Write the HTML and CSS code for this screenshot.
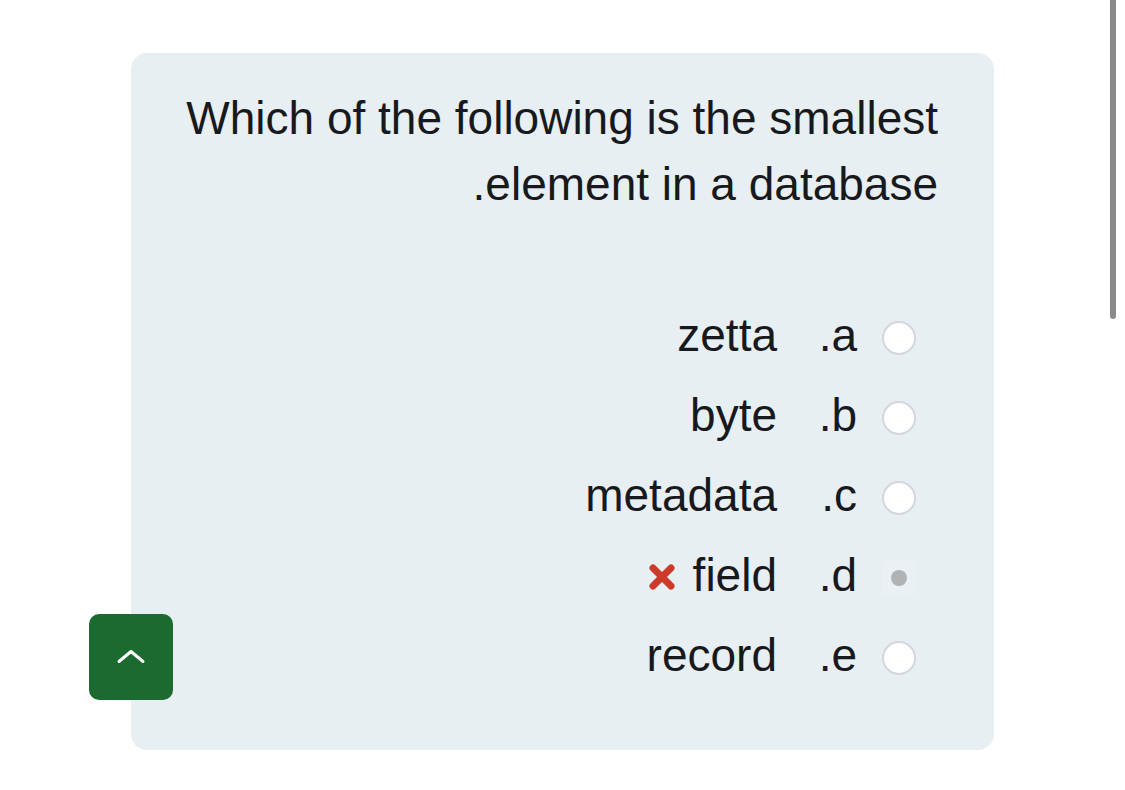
FILE: index.html
```html
<!DOCTYPE html>
<html lang="en">
<head>
<meta charset="utf-8">
<title>Quiz question</title>
<link rel="stylesheet" href="styles.css">
</head>
<body>
<div class="page">
  <div class="card" dir="rtl">
    <div class="qtext">Which of the following is the smallest element in a database.</div>
    <div class="answers">
      <div class="answer">
        <span class="radio"></span>
        <span class="num">a.</span>
        <span class="label">zetta</span>
      </div>
      <div class="answer">
        <span class="radio"></span>
        <span class="num">b.</span>
        <span class="label">byte</span>
      </div>
      <div class="answer">
        <span class="radio"></span>
        <span class="num">c.</span>
        <span class="label">metadata</span>
      </div>
      <div class="answer">
        <span class="radio checked"><span class="dot"></span></span>
        <span class="num">d.</span>
        <span class="label">field</span>
        <svg class="xicon" viewBox="0 0 30 30" width="30" height="30" aria-hidden="true">
          <path d="M6 6 L24 24 M24 6 L6 24" stroke="#cc3a2a" stroke-width="7" stroke-linecap="round" fill="none"/>
        </svg>
      </div>
      <div class="answer">
        <span class="radio"></span>
        <span class="num">e.</span>
        <span class="label">record</span>
      </div>
    </div>
  </div>
  <button class="back-btn" type="button" aria-label="Back to top">
    <svg viewBox="0 0 30 30" width="30" height="30" aria-hidden="true">
      <path d="M3 19.5 L15 9.5 L27 19.5" stroke="#ffffff" stroke-width="3" stroke-linecap="round" stroke-linejoin="round" fill="none"/>
    </svg>
  </button>
  <div class="scrollbar"></div>
</div>
</body>
</html>
```

FILE: styles.css
```css
html, body {
  margin: 0;
  padding: 0;
  background: #ffffff;
}

body {
  font-family: "Liberation Sans", Arial, sans-serif;
  color: #17191c;
}

.page {
  position: relative;
  width: 1125px;
  height: 790px;
  padding: 53px 0 0 131px;
  box-sizing: border-box;
  overflow: hidden;
}

.card {
  width: 863px;
  height: 697px;
  box-sizing: border-box;
  background: #e7eff3;
  border-radius: 16px;
  padding: 32px 56px 0 40px;
}

.qtext {
  font-size: 46px;
  line-height: 66px;
  text-align: start;
}

.answers {
  margin-top: 78px;
  margin-right: 22px;
  display: flex;
  flex-direction: column;
}

.answer {
  display: flex;
  align-items: center;
  height: 80px;
  font-size: 46px;
  line-height: 80px;
}

.radio {
  width: 34px;
  height: 34px;
  box-sizing: border-box;
  border: 2px solid #d3d7da;
  border-radius: 50%;
  background: #ffffff;
  margin-left: 25px;
  margin-top: 6px;
  flex: none;
  display: flex;
  align-items: center;
  justify-content: center;
}

.radio.checked {
  border: none;
  border-radius: 2px;
  background: #eaf0f3;
}

.dot {
  width: 16px;
  height: 16px;
  border-radius: 50%;
  background: #b0b3b6;
}

.num {
  width: 80px;
  flex: none;
  text-align: start;
}

.label {
  flex: none;
}

.xicon {
  margin-right: 16px;
  margin-top: 4px;
  flex: none;
}

.back-btn {
  position: absolute;
  left: 89px;
  top: 614px;
  width: 84px;
  height: 86px;
  border: none;
  border-radius: 10px;
  background: #1b6a2f;
  padding: 0;
  display: flex;
  align-items: center;
  justify-content: center;
  cursor: pointer;
}

.scrollbar {
  position: absolute;
  right: 9px;
  top: 0;
  width: 6px;
  height: 319px;
  background: #8a8a8a;
  border-radius: 0 0 3px 3px;
}
```
